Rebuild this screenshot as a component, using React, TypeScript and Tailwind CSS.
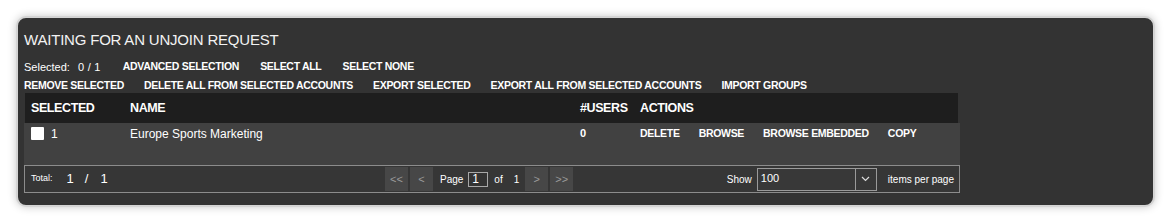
import React from 'react';

const toolbarTop = ['ADVANCED SELECTION', 'SELECT ALL', 'SELECT NONE'];
const toolbarBottom = [
  'REMOVE SELECTED',
  'DELETE ALL FROM SELECTED ACCOUNTS',
  'EXPORT SELECTED',
  'EXPORT ALL FROM SELECTED ACCOUNTS',
  'IMPORT GROUPS',
];
const actions = ['DELETE', 'BROWSE', 'BROWSE EMBEDDED', 'COPY'];

const PagerButton: React.FC<{ label: string; className?: string }> = ({ label, className = '' }) => (
  <div
    className={`w-[23px] h-[24px] flex-none flex items-center justify-center bg-[#474747] text-[#9a9a9a] text-[11px] leading-none ${className}`}
  >
    {label}
  </div>
);

export default function App() {
  return (
    <div className="w-[1171px] h-[224px] bg-white pt-[16px] pl-[16px] font-['Liberation_Sans',Arial,sans-serif] text-white">
      <div className="w-[1139px] h-[191px] border-2 border-[#d4d4d4] rounded-[10px] bg-[#333333] shadow-[0_0_8px_rgba(0,0,0,0.22)] pl-[6px] pt-[13px]">
        <div className="h-[18px] leading-[18px] text-[15px] tracking-[-0.2px] text-[#f2f2f2]">
          WAITING FOR AN UNJOIN REQUEST
        </div>

        <div className="mt-[10px] h-[16px] flex items-center text-[11px]">
          <span>Selected:</span>
          <span className="ml-[8px] tracking-[0.3px]">0 / 1</span>
          <div className="ml-[22px] flex items-center gap-[21px] text-[10.5px] font-bold tracking-[-0.3px]">
            {toolbarTop.map((t) => (
              <span key={t}>{t}</span>
            ))}
          </div>
        </div>

        <div className="mt-[3px] h-[15px] flex items-center gap-[20px] text-[10.5px] font-bold tracking-[-0.3px]">
          {toolbarBottom.map((t) => (
            <span key={t}>{t}</span>
          ))}
        </div>

        <div className="w-[936px]">
          <div className="ml-[1px] mr-[2px] h-[30px] bg-[#1e1e1e] flex items-center text-[12.5px] font-bold tracking-[-0.4px]">
            <div className="w-[99px] pl-[6px]">SELECTED</div>
            <div className="w-[450px] pl-[6px]">NAME</div>
            <div className="w-[60px] pl-[6px]">#USERS</div>
            <div className="pl-[6px]">ACTIONS</div>
          </div>

          <div className="h-[42px] bg-[#414141] pt-[4px]">
            <div className="h-[13px] flex items-center">
              <div className="w-[100px] pl-[7px] flex items-center">
                <div className="w-[13px] h-[13px] bg-white rounded-[1px]" />
                <span className="ml-[7px] text-[12px]">1</span>
              </div>
              <div className="w-[450px] pl-[6px] text-[12px]">Europe Sports Marketing</div>
              <div className="w-[60px] pl-[6px] text-[11px] font-bold">0</div>
              <div className="pl-[6px] flex items-center gap-[19px] text-[10.5px] font-bold tracking-[-0.3px]">
                {actions.map((a) => (
                  <span key={a}>{a}</span>
                ))}
              </div>
            </div>
          </div>

          <div className="h-[28px] border border-[#8c8c8c] bg-[#363636] flex items-center">
            <div className="w-[360px] flex-none pl-[6px] flex items-center">
              <span className="text-[9px]">Total:</span>
              <span className="ml-[14px] text-[13px]">1</span>
              <span className="ml-[11px] text-[13px]">/</span>
              <span className="ml-[12px] text-[13px]">1</span>
            </div>

            <div className="flex items-center text-[10px]">
              <PagerButton label="<<" />
              <PagerButton label="<" className="ml-[2px]" />
              <span className="ml-[7px]">Page</span>
              <div className="ml-[5px] w-[20px] h-[15px] border border-[#a8a8a8] bg-[#333333] text-[12px] leading-[13px] pl-[3px]">
                1
              </div>
              <span className="ml-[6px]">of</span>
              <span className="ml-[11px]">1</span>
              <PagerButton label=">" className="ml-[6px]" />
              <PagerButton label=">>" className="ml-[2px]" />
            </div>

            <div className="flex-1" />

            <div className="flex items-center pr-[5px] text-[10px]">
              <span>Show</span>
              <div className="ml-[5px] w-[120px] h-[23px] border border-[#9a9a9a] bg-[#383838] flex">
                <div className="flex-1 pl-[3px] pt-[3px] text-[11px] leading-[13px]">100</div>
                <div className="w-[21px] border-l border-[#9a9a9a] flex items-center justify-center">
                  <svg width="9" height="6" viewBox="0 0 9 6" fill="none">
                    <polyline points="1,1 4.5,4.5 8,1" stroke="#dddddd" strokeWidth="1.2" />
                  </svg>
                </div>
              </div>
              <span className="ml-[11px]">items per page</span>
            </div>
          </div>
        </div>
      </div>
    </div>
  );
}
